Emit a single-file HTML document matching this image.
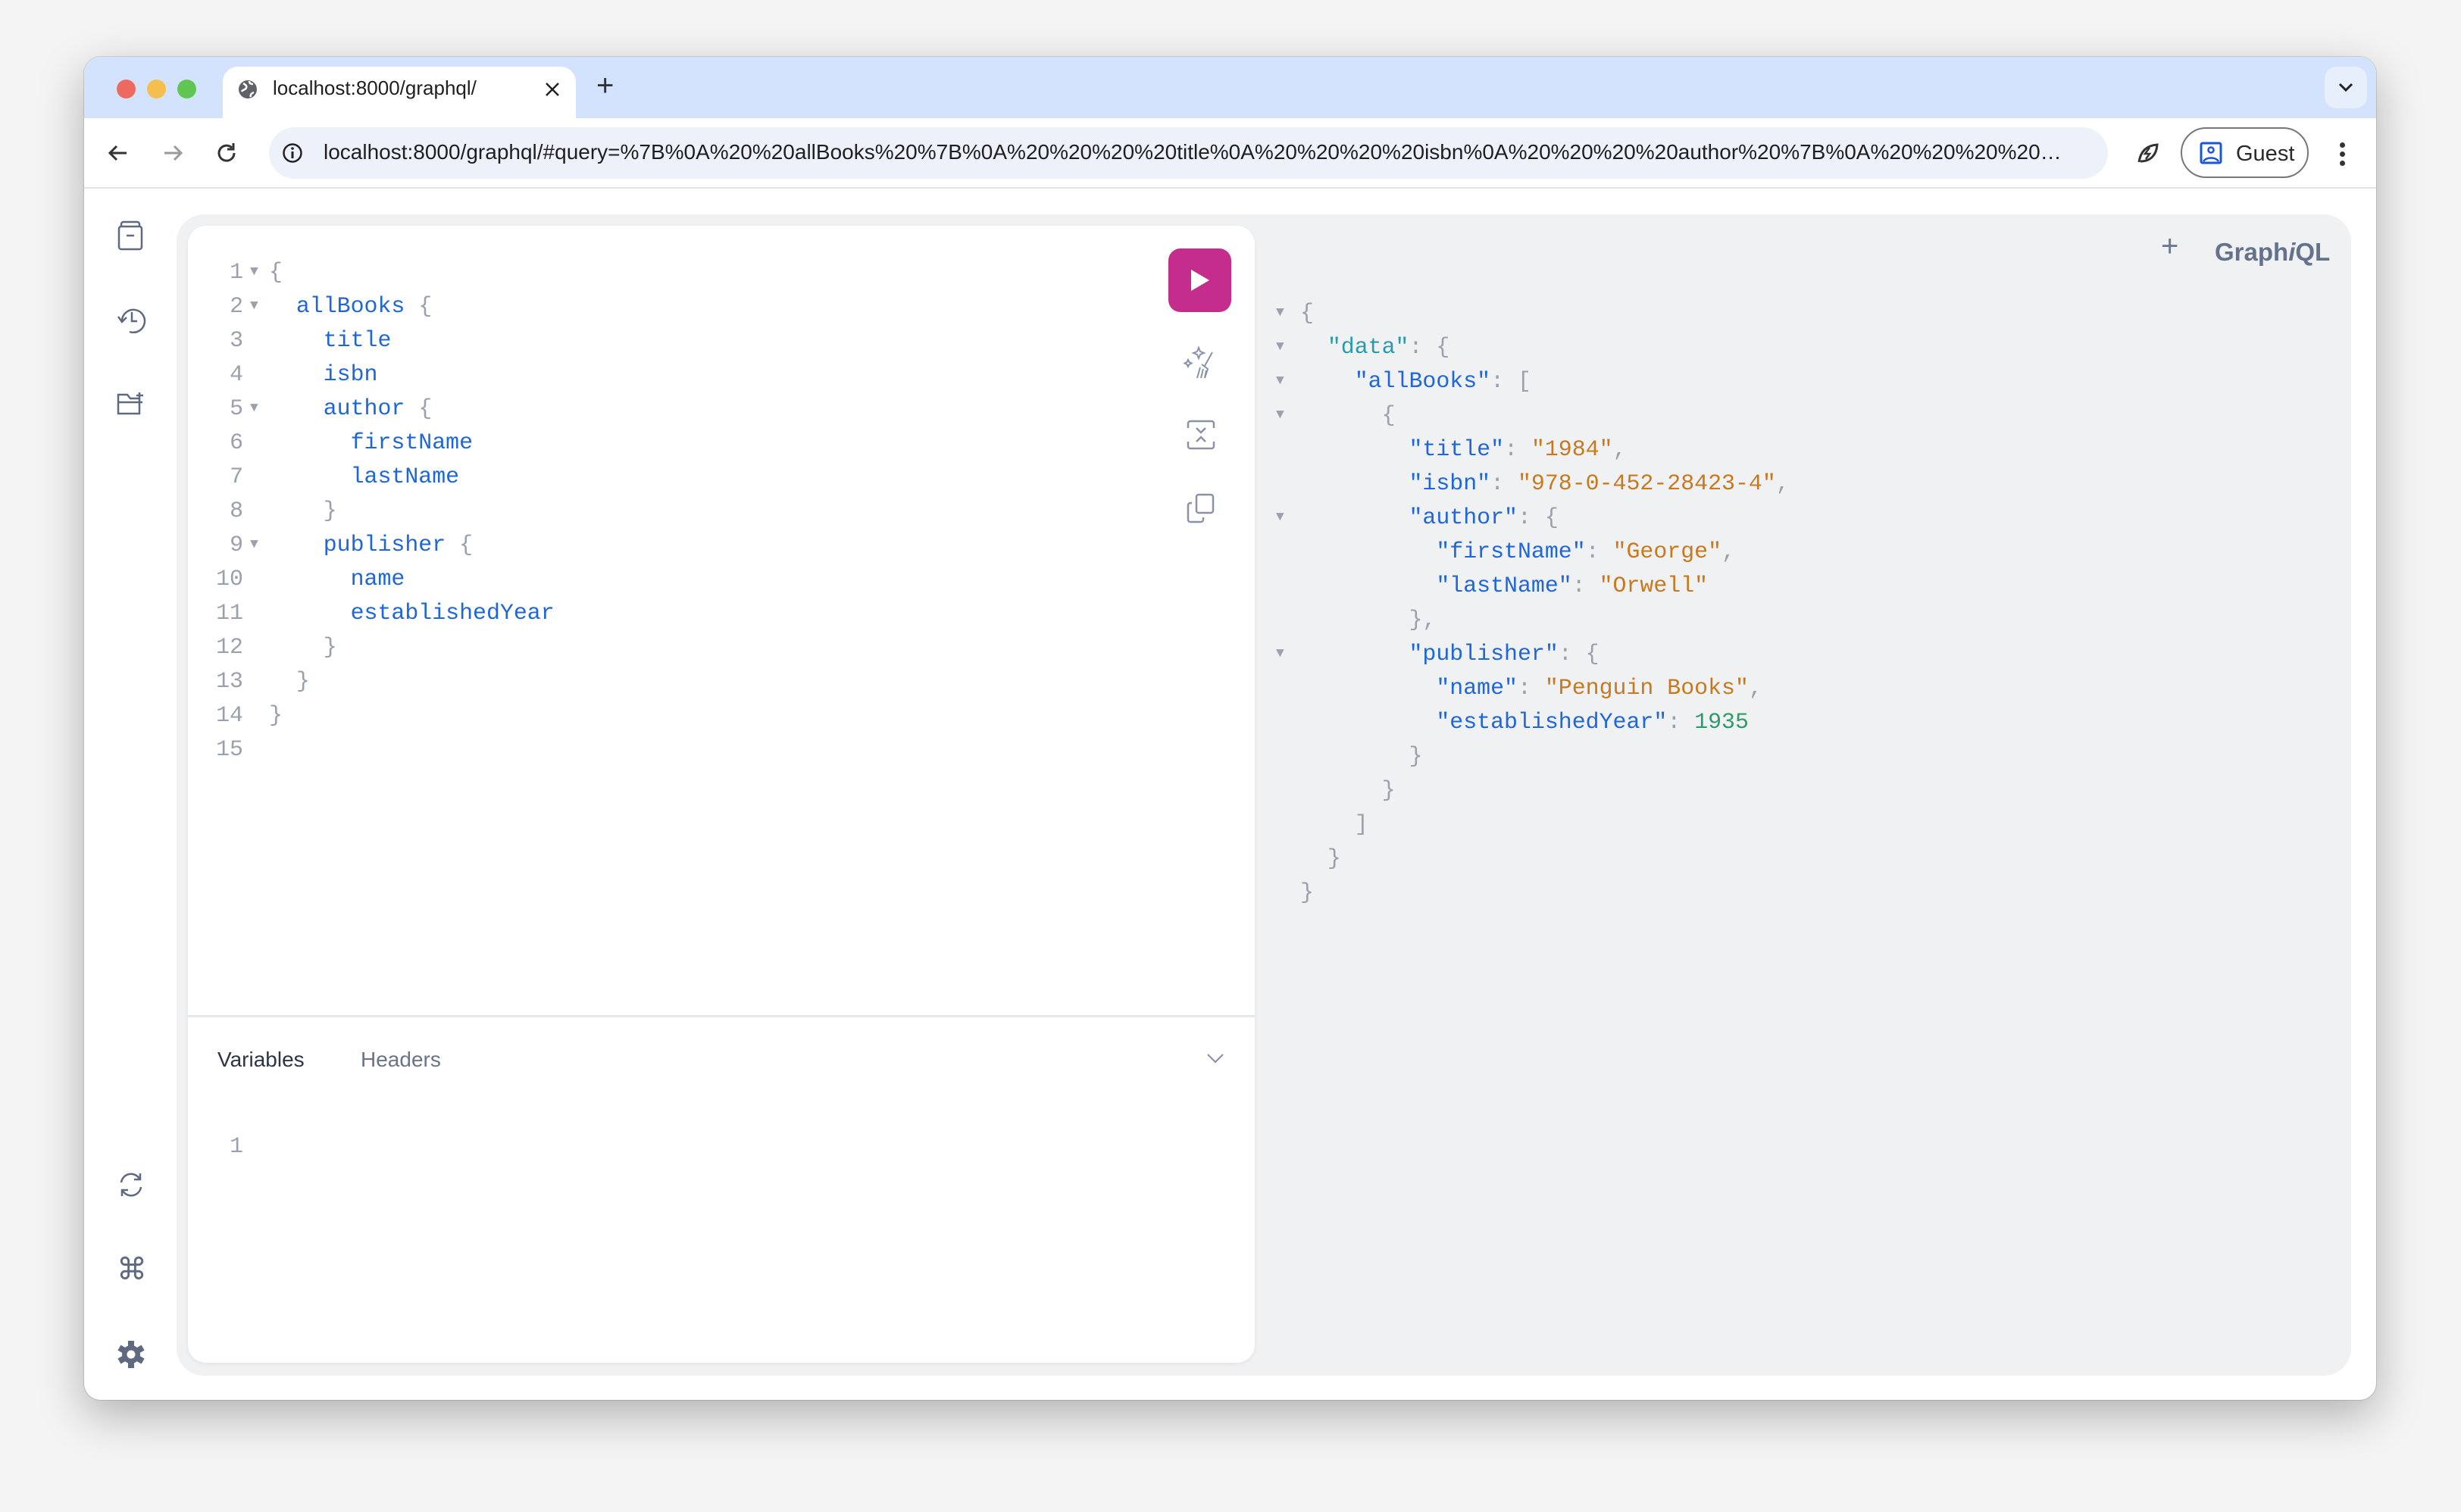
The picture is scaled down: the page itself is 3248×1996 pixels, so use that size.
<!DOCTYPE html>
<html><head><meta charset="utf-8"><style>
*{box-sizing:border-box;margin:0;padding:0}
body{width:3248px;height:1996px;background:#f4f4f4;position:relative;overflow:hidden;font-family:"Liberation Sans",sans-serif}
.abs{position:absolute}
#win{left:111px;top:75px;width:3025px;height:1773px;border-radius:22px;background:#fff;overflow:hidden;box-shadow:0 20px 60px rgba(0,0,0,.28),0 0 0 1px rgba(0,0,0,.12)}
.code{font-family:"Liberation Mono",monospace;font-size:29.9px;line-height:45px;white-space:pre}
.ln{color:#9aa1ad;text-align:right;width:70px}
.tri{color:#9aa1ad;font-size:18px}
.k{color:#1f66d9}.p{color:#9aa1ad}.s{color:#c8791c}.n{color:#2f9a6a}.t{color:#2a9bab}
</style></head><body>
<div id="win" class="abs">
 <div class="abs" style="left:0;top:0;width:3025px;height:81px;background:#d3e3fd"></div>
 <div class="abs" style="left:43px;top:30px;width:25px;height:25px;border-radius:50%;background:#ed6a5e"></div>
 <div class="abs" style="left:83px;top:30px;width:25px;height:25px;border-radius:50%;background:#f5bf4f"></div>
 <div class="abs" style="left:123px;top:30px;width:25px;height:25px;border-radius:50%;background:#61c554"></div>
 <div class="abs" style="left:183px;top:13px;width:466px;height:70px;background:#fff;border-radius:20px 20px 0 0"></div>
 <svg class="abs" style="left:202px;top:29px" width="28" height="28" viewBox="0 0 28 28"><circle cx="14" cy="14" r="12" fill="#5f6368"/><path d="M8 6c3 2 5 3 4 6s-5 2-6 5M16 3c0 3 2 4 5 4M18 24c-1-3 1-5 4-6" stroke="#fff" stroke-width="2.5" fill="none"/></svg>
 <div class="abs" style="left:249px;top:26px;font-size:26px;color:#1f1f1f">localhost:8000/graphql/</div>
 <svg class="abs" style="left:607px;top:32px" width="22" height="22" viewBox="0 0 22 22"><path d="M3 3l16 16M19 3L3 19" stroke="#222" stroke-width="2.5"/></svg>
 <div class="abs" style="left:676px;top:16px;font-size:40px;color:#333;font-weight:300">+</div>
 <div class="abs" style="left:2957px;top:13px;width:56px;height:55px;border-radius:16px;background:#e8effc"></div>
 <svg class="abs" style="left:2974px;top:32px" width="22" height="16" viewBox="0 0 22 16"><path d="M3 4l8 8 8-8" stroke="#222" stroke-width="3" fill="none"/></svg>
 <div class="abs" style="left:0;top:172px;width:3025px;height:2px;background:#e3e3e3"></div>
 <svg class="abs" style="left:30px;top:112px" width="30" height="30" viewBox="0 0 30 30"><path d="M26 15H5M13 6l-9 9 9 9" stroke="#333" stroke-width="3" fill="none"/></svg>
 <svg class="abs" style="left:102px;top:112px" width="30" height="30" viewBox="0 0 30 30"><path d="M4 15h21M17 6l9 9-9 9" stroke="#9a9a9a" stroke-width="3" fill="none"/></svg>
 <svg class="abs" style="left:174px;top:112px" width="30" height="30" viewBox="0 0 30 30"><path d="M24 15a10 10 0 1 1-3-7" stroke="#333" stroke-width="3" fill="none"/><path d="M23 2v8h-8" stroke="#333" stroke-width="3" fill="none"/></svg>
 <div class="abs" style="left:244px;top:93px;width:2427px;height:68px;border-radius:34px;background:#edf2fa"></div>
 <svg class="abs" style="left:261px;top:113px" width="28" height="28" viewBox="0 0 28 28"><circle cx="14" cy="14" r="11.5" stroke="#222" stroke-width="2.5" fill="none"/><path d="M14 12v9" stroke="#222" stroke-width="3"/><circle cx="14" cy="8" r="1.8" fill="#222"/></svg>
 <div class="abs" style="left:316px;top:110px;width:2300px;font-size:28px;color:#1f1f1f;white-space:nowrap;overflow:hidden;text-overflow:ellipsis">localhost:8000/graphql/#query=%7B%0A%20%20allBooks%20%7B%0A%20%20%20%20title%0A%20%20%20%20isbn%0A%20%20%20%20author%20%7B%0A%20%20%20%20%20%20firstName%0A%20%20%20%20%20%20lastName%0A%20%20%20%20%7D</div>
 <svg class="abs" style="left:2707px;top:111px" width="32" height="32" viewBox="0 0 32 32"><path d="M5 28c2-14 10-22 24-23-1 14-9 22-22 22" stroke="#333" stroke-width="3" fill="none"/><path d="M19 9l-6 8h6l-5 7" stroke="#333" stroke-width="2.5" fill="none"/></svg>
 <div class="abs" style="left:2767px;top:93px;width:169px;height:67px;border-radius:34px;border:2px solid #777"></div>
 <svg class="abs" style="left:2792px;top:112px" width="30" height="30" viewBox="0 0 30 30"><rect x="2" y="2" width="26" height="26" rx="2" stroke="#1b55d6" stroke-width="3" fill="none"/><circle cx="15" cy="11" r="3.5" stroke="#1b55d6" stroke-width="2.5" fill="none"/><path d="M5 26c4-6 16-6 20 0" stroke="#1b55d6" stroke-width="2.5" fill="none"/></svg>
 <div class="abs" style="left:2840px;top:112px;font-size:29px;color:#2a2a2a">Guest</div>
 <div class="abs" style="left:2977px;top:113px;width:7px;height:7px;border-radius:50%;background:#333;box-shadow:0 12px 0 #333,0 24px 0 #333"></div>
 <div class="abs" style="left:122px;top:208px;width:2870px;height:1533px;border-radius:36px;background:#f0f1f3"></div>
 <svg class="abs" style="left:44px;top:216px" width="34" height="40" viewBox="0 0 34 40"><rect x="2" y="8" width="30" height="30" rx="3" stroke="#5f6a80" stroke-width="2.5" fill="none"/><path d="M5 8V5a3 3 0 0 1 3-3h18a3 3 0 0 1 3 3v3M12 20h10" stroke="#5f6a80" stroke-width="2.5" fill="none"/></svg>
 <svg class="abs" style="left:43px;top:329px" width="40" height="36" viewBox="0 0 40 36"><path d="M7 20a15 15 0 1 1 10 14" stroke="#5f6a80" stroke-width="2.5" fill="none"/><path d="M2 14l5 7 6-6M20 8v12h7" stroke="#5f6a80" stroke-width="2.5" fill="none"/></svg>
 <svg class="abs" style="left:43px;top:442px" width="38" height="32" viewBox="0 0 38 32"><path d="M2 4h12l4 5h12v20H2zM2 14h32" stroke="#5f6a80" stroke-width="2.5" fill="none"/><path d="M30 1v9M26 5h9" stroke="#5f6a80" stroke-width="2.5"/></svg>
 <svg class="abs" style="left:44px;top:1471px" width="36" height="36" viewBox="0 0 36 36"><path d="M5 15a13 13 0 0 1 24-5M31 21a13 13 0 0 1-24 5" stroke="#5f6a80" stroke-width="2.5" fill="none"/><path d="M30 3v8h-8M6 33v-8h8" stroke="#5f6a80" stroke-width="2.5" fill="none"/></svg>
 <div class="abs" style="left:43px;top:1578px;font-size:40px;color:#5f6a80">⌘</div>
 <svg class="abs" style="left:43px;top:1694px" width="38" height="38" viewBox="0 0 38 38"><g fill="#5f6a80"><circle cx="19" cy="19" r="12"/><rect x="15" y="1" width="8" height="36"/><rect x="15" y="1" width="8" height="36" transform="rotate(60 19 19)"/><rect x="15" y="1" width="8" height="36" transform="rotate(120 19 19)"/></g><circle cx="19" cy="19" r="5.5" fill="#fff"/></svg>
 <div class="abs" style="left:137px;top:223px;width:1408px;height:1501px;border-radius:24px;background:#fff;box-shadow:0 2px 6px rgba(0,0,0,.06)"></div>
 <div class="abs" style="left:137px;top:1265px;width:1408px;height:3px;background:#e6e8ec"></div>
 <div class="abs code" style="left:140px;top:262px">
<div class="abs ln" style="left:0;top:0">1</div><div class="abs ln" style="left:0;top:45px">2</div><div class="abs ln" style="left:0;top:90px">3</div><div class="abs ln" style="left:0;top:135px">4</div><div class="abs ln" style="left:0;top:180px">5</div><div class="abs ln" style="left:0;top:225px">6</div><div class="abs ln" style="left:0;top:270px">7</div><div class="abs ln" style="left:0;top:315px">8</div><div class="abs ln" style="left:0;top:360px">9</div><div class="abs ln" style="left:0;top:405px">10</div><div class="abs ln" style="left:0;top:450px">11</div><div class="abs ln" style="left:0;top:495px">12</div><div class="abs ln" style="left:0;top:540px">13</div><div class="abs ln" style="left:0;top:585px">14</div><div class="abs ln" style="left:0;top:630px">15</div>
<div class="abs tri" style="left:79px;top:0">▼</div><div class="abs tri" style="left:79px;top:45px">▼</div><div class="abs tri" style="left:79px;top:180px">▼</div><div class="abs tri" style="left:79px;top:360px">▼</div>
<div class="abs" style="left:104px;top:0"><span class="p">{</span>
  <span class="k">allBooks</span> <span class="p">{</span>
    <span class="k">title</span>
    <span class="k">isbn</span>
    <span class="k">author</span> <span class="p">{</span>
      <span class="k">firstName</span>
      <span class="k">lastName</span>
    <span class="p">}</span>
    <span class="k">publisher</span> <span class="p">{</span>
      <span class="k">name</span>
      <span class="k">establishedYear</span>
    <span class="p">}</span>
  <span class="p">}</span>
<span class="p">}</span>
</div></div>
 <div class="abs" style="left:1431px;top:253px;width:83px;height:84px;border-radius:16px;background:#c42d8b"></div>
 <svg class="abs" style="left:1455px;top:278px" width="34" height="34" viewBox="0 0 34 34"><path d="M6 3l24 14-24 14z" fill="#fff"/></svg>
 <svg class="abs" style="left:1451px;top:382px" width="44" height="44" viewBox="0 0 44 44"><path d="M20 2l2 5 5 2-5 2-2 5-2-5-5-2 5-2zM6 18l1.5 3 3 1.5-3 1.5L6 27l-1.5-3-3-1.5 3-1.5z" stroke="#8a93a5" stroke-width="2" fill="none"/><path d="M38 8L28 26M24 24l8 6-4 12M22 28l-4 14M26 30l-3 12M30 32l-2 10" stroke="#8a93a5" stroke-width="2" fill="none"/></svg>
 <svg class="abs" style="left:1454px;top:478px" width="40" height="42" viewBox="0 0 40 42"><path d="M3 12V6a3 3 0 0 1 3-3h28a3 3 0 0 1 3 3v6M3 30v6a3 3 0 0 0 3 3h28a3 3 0 0 0 3-3v-6M14 12l6 6 6-6M14 30l6-6 6 6" stroke="#8a93a5" stroke-width="2.5" fill="none"/></svg>
 <svg class="abs" style="left:1454px;top:575px" width="40" height="42" viewBox="0 0 40 42"><rect x="14" y="3" width="22" height="24" rx="3" stroke="#8a93a5" stroke-width="2.5" fill="none"/><path d="M8 14H6a3 3 0 0 0-3 3v19a3 3 0 0 0 3 3h14a3 3 0 0 0 3-3v-3" stroke="#8a93a5" stroke-width="2.5" fill="none"/></svg>
 <div class="abs" style="left:176px;top:1308px;font-size:28px;color:#2c3547">Variables</div>
 <div class="abs" style="left:365px;top:1308px;font-size:28px;color:#6a7387">Headers</div>
 <svg class="abs" style="left:1481px;top:1314px" width="24" height="16" viewBox="0 0 24 16"><path d="M2 3l10 10 10-10" stroke="#8a93a5" stroke-width="2.2" fill="none"/></svg>
 <div class="abs code ln" style="left:140px;top:1416px">1</div>
 <div class="abs code" style="left:1573px;top:316px">
<div class="abs tri" style="left:0;top:0">▼</div><div class="abs tri" style="left:0;top:45px">▼</div><div class="abs tri" style="left:0;top:90px">▼</div><div class="abs tri" style="left:0;top:135px">▼</div><div class="abs tri" style="left:0;top:270px">▼</div><div class="abs tri" style="left:0;top:450px">▼</div>
<div class="abs" style="left:32px;top:0"><span class="p">{</span>
  <span class="t">"data"</span><span class="p">: {</span>
    <span class="k">"allBooks"</span><span class="p">: [</span>
      <span class="p">{</span>
        <span class="k">"title"</span><span class="p">: </span><span class="s">"1984"</span><span class="p">,</span>
        <span class="k">"isbn"</span><span class="p">: </span><span class="s">"978-0-452-28423-4"</span><span class="p">,</span>
        <span class="k">"author"</span><span class="p">: {</span>
          <span class="k">"firstName"</span><span class="p">: </span><span class="s">"George"</span><span class="p">,</span>
          <span class="k">"lastName"</span><span class="p">: </span><span class="s">"Orwell"</span>
        <span class="p">},</span>
        <span class="k">"publisher"</span><span class="p">: {</span>
          <span class="k">"name"</span><span class="p">: </span><span class="s">"Penguin Books"</span><span class="p">,</span>
          <span class="k">"establishedYear"</span><span class="p">: </span><span class="n">1935</span>
        <span class="p">}</span>
      <span class="p">}</span>
    <span class="p">]</span>
  <span class="p">}</span>
<span class="p">}</span>
</div></div>
 <div class="abs" style="left:2741px;top:228px;font-size:40px;color:#6b7891;font-weight:300">+</div>
 <div class="abs" style="left:2812px;top:239px;font-size:33px;color:#65728c;font-weight:bold">Graph<i>i</i>QL</div>
</div>
</body></html>
